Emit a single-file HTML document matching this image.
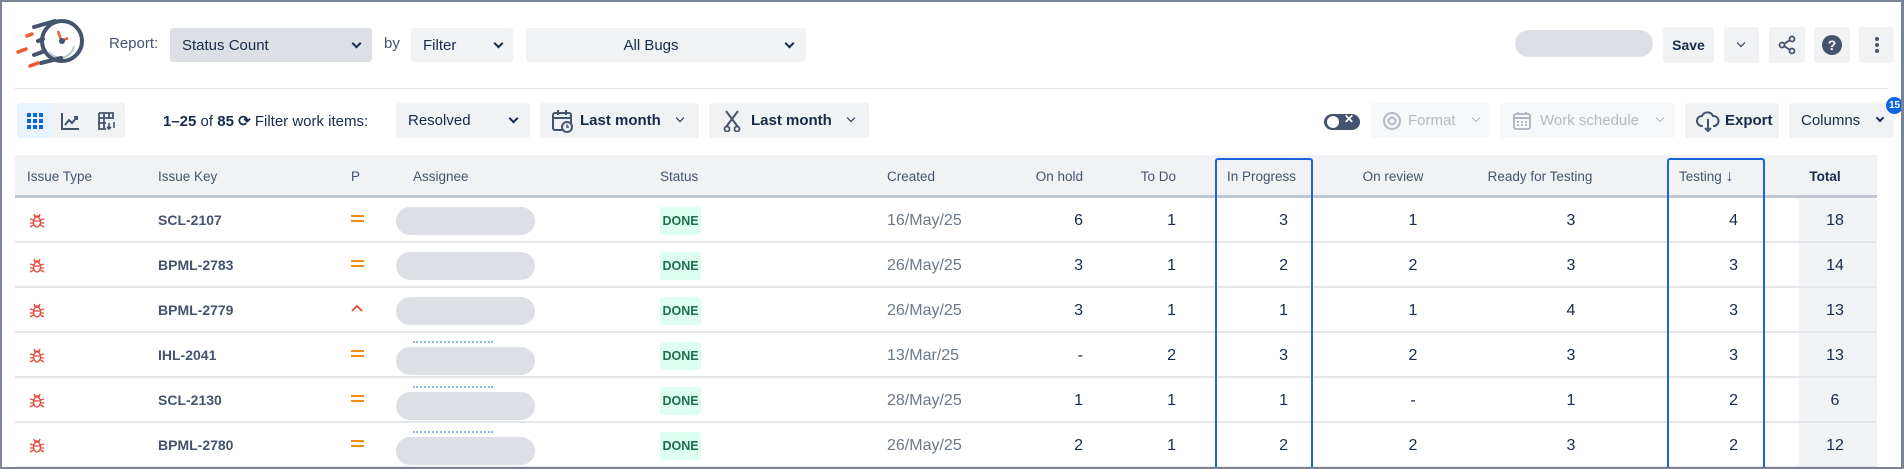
<!DOCTYPE html>
<html><head><meta charset="utf-8"><style>
*{box-sizing:border-box;margin:0;padding:0}
body{width:1904px;height:469px;overflow:hidden;background:#fff;font-family:"Liberation Sans",sans-serif;color:#172b4d;position:relative}
.frame{position:absolute;left:0;top:0;width:1904px;height:469px;border:2px solid #7b8494;border-right-width:3px}
.a{position:absolute}
.btn{position:absolute;background:#f1f2f4;border-radius:3px;display:flex;align-items:center;font-size:15px;color:#172b4d}
.sel{background:#dcdfe4}
.chev{position:absolute;width:7px;height:7px;border-right:2px solid #172b4d;border-bottom:2px solid #172b4d;transform:rotate(45deg)}
.th{position:absolute;top:155px;height:43px;line-height:43px;font-size:13.5px;color:#44546f}
.row{position:absolute;left:15px;width:1862px;height:45px;border-bottom:2px solid #e4e6ea}
.c{position:absolute;line-height:45px;font-size:16px;color:#172b4d}
.key{position:absolute;left:143px;line-height:45px;font-size:14px;font-weight:bold;color:#44546f}
.pill{position:absolute;left:381px;width:139px;height:28px;background:#dcdfe4;border-radius:14px}
.done{position:absolute;left:645px;top:9px;width:41px;height:28px;background:#dcfff1;border-radius:3px;color:#216e4e;font-weight:bold;font-size:12.5px;line-height:28px;text-align:center}
.date{position:absolute;left:872px;line-height:45px;font-size:16px;color:#6b778c}
.r{text-align:right}
.ctr{text-align:center}
.dis{color:#b3b9c4;background:#f7f8f9}
</style></head><body>

<!-- logo -->
<svg class="a" style="left:0;top:0" width="100" height="90" viewBox="0 0 100 90">
<circle cx="62" cy="41" r="20" fill="none" stroke="#44546f" stroke-width="4"/>
<path d="M49 52 A14 14 0 0 0 74 46" fill="none" stroke="#c1c7d0" stroke-width="2"/>
<line x1="58" y1="31" x2="61" y2="40" stroke="#f15b2a" stroke-width="2.5"/>
<line x1="62" y1="41" x2="68" y2="38" stroke="#f15b2a" stroke-width="2.5"/>
<circle cx="62" cy="41" r="3" fill="#44546f"/>
<path d="M34 27 L55 21 M38 41 L43 39 M34 55 L45 51 M41 63 L61 58" stroke="#44546f" stroke-width="4" stroke-linecap="round"/>
<path d="M27 36 L32 34 M18 52 L26 49 M30 66 L38 63" stroke="#f15b2a" stroke-width="3.5" stroke-linecap="round"/>
</svg>

<div class="a" style="left:109px;top:35px;font-size:15px;color:#44546f">Report:</div>
<div class="btn sel" style="left:170px;top:28px;width:202px;height:34px;padding-left:12px">Status Count<span class="chev" style="left:183px;top:12px"></span></div>
<div class="a" style="left:384px;top:35px;font-size:15px;color:#44546f">by</div>
<div class="btn" style="left:411px;top:28px;width:102px;height:34px;padding-left:12px">Filter<span class="chev" style="left:84px;top:12px"></span></div>
<div class="btn" style="left:526px;top:28px;width:280px;height:34px;justify-content:center;padding-right:30px">All Bugs<span class="chev" style="left:260px;top:12px"></span></div>

<div class="a" style="left:1515px;top:30px;width:138px;height:27px;background:#dcdfe4;border-radius:14px"></div>
<div class="btn" style="left:1663px;top:27px;width:51px;height:36px;justify-content:center;font-weight:bold;font-size:14px">Save</div>
<div class="btn" style="left:1724px;top:27px;width:35px;height:36px"><span class="chev" style="left:14px;top:13px;width:6px;height:6px;border-width:1.5px"></span></div>
<div class="btn" style="left:1769px;top:27px;width:36px;height:36px;justify-content:center">
<svg width="20" height="20" viewBox="0 0 20 20"><circle cx="15" cy="4" r="2.5" fill="none" stroke="#44546f" stroke-width="1.8"/><circle cx="5" cy="10" r="2.5" fill="none" stroke="#44546f" stroke-width="1.8"/><circle cx="15" cy="16" r="2.5" fill="none" stroke="#44546f" stroke-width="1.8"/><path d="M7 9 L13 5 M7 11 L13 15" stroke="#44546f" stroke-width="1.8"/></svg></div>
<div class="btn" style="left:1814px;top:27px;width:36px;height:36px;justify-content:center">
<svg width="22" height="22" viewBox="0 0 22 22"><circle cx="11" cy="11" r="10" fill="#44546f"/><text x="11" y="16" font-size="14" font-weight="bold" fill="#fff" text-anchor="middle" font-family="Liberation Sans">?</text></svg></div>
<div class="btn" style="left:1859px;top:27px;width:35px;height:36px;justify-content:center">
<svg width="6" height="20"><circle cx="3" cy="4" r="2" fill="#44546f"/><circle cx="3" cy="10" r="2" fill="#44546f"/><circle cx="3" cy="16" r="2" fill="#44546f"/></svg></div>

<div class="a" style="left:15px;top:88px;width:1873px;height:1px;background:#dcdfe4"></div>

<!-- toolbar -->
<div class="a" style="left:17px;top:103px;width:108px;height:35px;background:#f1f2f4;border-radius:3px"></div>
<div class="a" style="left:17px;top:103px;width:36px;height:35px;background:#e9f2ff;border-radius:3px"></div>
<svg class="a" style="left:26px;top:112px" width="18" height="18"><g fill="#0c66e4"><rect x="1" y="1" width="4" height="4"/><rect x="7" y="1" width="4" height="4"/><rect x="13" y="1" width="4" height="4"/><rect x="1" y="7" width="4" height="4"/><rect x="7" y="7" width="4" height="4"/><rect x="13" y="7" width="4" height="4"/><rect x="1" y="13" width="4" height="4"/><rect x="7" y="13" width="4" height="4"/><rect x="13" y="13" width="4" height="4"/></g></svg>
<svg class="a" style="left:60px;top:111px" width="20" height="20"><path d="M2 2 V18 H19" fill="none" stroke="#44546f" stroke-width="2"/><path d="M5 14 L9 9 L12 12 L17 6 M14 6 H17 V9" fill="none" stroke="#44546f" stroke-width="2"/></svg>
<svg class="a" style="left:97px;top:111px" width="20" height="20"><path d="M2 2 H16 V8 M2 2 V18 H9 M2 7 H16 M2 12 H9 M7 2 V18 M12 2 V8" fill="none" stroke="#44546f" stroke-width="1.8"/><path d="M12 12 V18 M10 16 L12 18 L14 16 M17 11 V17" fill="none" stroke="#44546f" stroke-width="1.6"/></svg>

<div class="a" style="left:163px;top:112px;font-size:15px;color:#172b4d"><b>1–25</b> of <b>85</b> <b>⟳</b> Filter work items:</div>
<div class="btn" style="left:396px;top:103px;width:134px;height:35px;padding-left:12px">Resolved<span class="chev" style="left:114px;top:12px"></span></div>
<div class="btn" style="left:540px;top:103px;width:159px;height:35px;padding-left:12px;font-weight:bold">
<svg width="22" height="24" style="margin-right:6px"><rect x="1" y="4" width="18" height="17" rx="2" fill="none" stroke="#44546f" stroke-width="2"/><path d="M1 9 H19 M6 1 V6 M14 1 V6" stroke="#44546f" stroke-width="2"/><circle cx="15" cy="18" r="5" fill="#f1f2f4" stroke="#44546f" stroke-width="2"/><path d="M15 15.5 V18 H17" stroke="#44546f" stroke-width="1.5" fill="none"/></svg>Last month<span class="chev" style="left:137px;top:12px;width:6px;height:6px;border-width:1.5px"></span></div>
<div class="btn" style="left:709px;top:103px;width:160px;height:35px;padding-left:14px;font-weight:bold">
<svg width="18" height="22" style="margin-right:10px"><path d="M3 1 L15 17 M15 1 L3 17" stroke="#44546f" stroke-width="2"/><circle cx="4" cy="19" r="2.5" fill="none" stroke="#44546f" stroke-width="1.8"/><circle cx="14" cy="19" r="2.5" fill="none" stroke="#44546f" stroke-width="1.8"/></svg>Last month<span class="chev" style="left:139px;top:12px;width:6px;height:6px;border-width:1.5px"></span></div>

<div class="a" style="left:1324px;top:114px;width:36px;height:16px;background:#44546f;border-radius:8px"></div>
<div class="a" style="left:1327px;top:116px;width:12px;height:12px;background:#fff;border-radius:6px"></div>
<div class="a" style="left:1344px;top:112px;color:#fff;font-size:12px;font-weight:bold">✕</div>
<div class="btn dis" style="left:1370px;top:103px;width:120px;height:35px;padding-left:12px;color:#b3b9c4">
<svg width="20" height="20" style="margin-right:6px"><circle cx="10" cy="10" r="8" fill="none" stroke="#b3b9c4" stroke-width="2"/><circle cx="10" cy="10" r="3.5" fill="none" stroke="#b3b9c4" stroke-width="2"/></svg>Format<span class="chev" style="left:103px;top:12px;width:6px;height:6px;border-width:1.5px;border-color:#b3b9c4"></span></div>
<div class="btn dis" style="left:1500px;top:103px;width:175px;height:35px;padding-left:12px;color:#b3b9c4">
<svg width="20" height="20" style="margin-right:8px"><rect x="2" y="3" width="16" height="15" rx="2" fill="none" stroke="#b3b9c4" stroke-width="2"/><path d="M2 7 H18 M6 1 V4 M14 1 V4" stroke="#b3b9c4" stroke-width="2"/><g fill="#b3b9c4"><rect x="5" y="10" width="2" height="2"/><rect x="9" y="10" width="2" height="2"/><rect x="13" y="10" width="2" height="2"/><rect x="5" y="13" width="2" height="2"/><rect x="9" y="13" width="2" height="2"/><rect x="13" y="13" width="2" height="2"/></g></svg>Work schedule<span class="chev" style="left:157px;top:12px;width:6px;height:6px;border-width:1.5px;border-color:#b3b9c4"></span></div>
<div class="btn" style="left:1685px;top:103px;width:94px;height:35px;padding-left:11px;font-weight:bold">
<svg width="24" height="22" style="margin-right:5px"><path d="M7 16 H6 A5 5 0 0 1 6 6 A6 6 0 0 1 17 6 A4.5 4.5 0 0 1 18 16 H17" fill="none" stroke="#44546f" stroke-width="2"/><path d="M12 9 V21 M9 18 L12 21 L15 18" fill="none" stroke="#44546f" stroke-width="2"/></svg>Export</div>
<div class="btn" style="left:1789px;top:103px;width:105px;height:35px;padding-left:12px">Columns<span class="chev" style="left:88px;top:12px;width:6px;height:6px"></span></div>
<div class="a" style="left:1886px;top:97px;width:17px;height:17px;background:#0c66e4;border-radius:9px;color:#fff;font-size:10px;font-weight:bold;text-align:center;line-height:17px">15</div>

<!-- table header -->
<div class="a" style="left:15px;top:155px;width:1862px;height:43px;background:#f1f2f4;border-bottom:3px solid #c1c7d0"></div>
<div class="th" style="left:27px">Issue Type</div>
<div class="th" style="left:158px">Issue Key</div>
<div class="th" style="left:351px">P</div>
<div class="th" style="left:413px">Assignee</div>
<div class="th" style="left:660px">Status</div>
<div class="th" style="left:887px">Created</div>
<div class="th r" style="left:1000px;width:83px">On hold</div>
<div class="th r" style="left:1100px;width:76px">To Do</div>
<div class="th" style="left:1227px">In Progress</div>
<div class="th ctr" style="left:1343px;width:100px">On review</div>
<div class="th ctr" style="left:1470px;width:140px">Ready for Testing</div>
<div class="th" style="left:1679px">Testing <b style="color:#44546f;font-size:16px">↓</b></div>
<div class="th ctr" style="left:1799px;width:52px;font-weight:bold;color:#172b4d">Total</div>
<div class="a" style="left:1799px;top:198px;width:78px;height:269px;background:#f1f2f4"></div>

<div id="rows"></div>

<script>
var data=[["SCL-2107","=","16/May/25","6","1","3","1","3","4","18"],
["BPML-2783","=","26/May/25","3","1","2","2","3","3","14"],
["BPML-2779","^","26/May/25","3","1","1","1","4","3","13"],
["IHL-2041","=","13/Mar/25","-","2","3","2","3","3","13"],
["SCL-2130","=","28/May/25","1","1","1","-","1","2","6"],
["BPML-2780","=","26/May/25","2","1","2","2","3","2","12"]];
var h="";
data.forEach(function(d,i){
var t=198+i*45,off=i>=3?5:0;
var bug='<svg style="position:absolute;left:14px;top:13px" width="16" height="18" viewBox="0 0 16 18"><g fill="none" stroke="#e5493a" stroke-width="1.3"><ellipse cx="8" cy="11" rx="3.5" ry="5"/><path d="M5 3 L6 6 M11 3 L10 6 M6 5 H10 M1 8 L4.5 9 M15 8 L11.5 9 M1 12 H4.5 M15 12 H11.5 M1 16 L4.5 14 M15 16 L11.5 14 M4.5 10 H11.5"/></g></svg>';
var pr=d[1]=="="?'<div style="position:absolute;left:336px;top:17px;width:13px;height:2px;background:#f18d13"></div><div style="position:absolute;left:336px;top:22px;width:13px;height:2px;background:#f18d13"></div>':'<svg style="position:absolute;left:335px;top:15px" width="14" height="10"><path d="M2 8 L7 3 L12 8" fill="none" stroke="#e5493a" stroke-width="1.8"/></svg>';
h+='<div class="row" style="top:'+t+'px">'+bug+'<span class="key">'+d[0]+'</span>'+pr+
(off?'<div style="position:absolute;left:398px;top:8px;width:80px;height:2px;border-top:2px dotted #8fb8f6"></div>':'')+
'<div class="pill" style="top:'+(9+off)+'px"></div><div class="done">DONE</div><span class="date">'+d[2]+'</span>'+
'<span class="c r" style="left:1000px;width:68px">'+d[3]+'</span>'+
'<span class="c r" style="left:1100px;width:61px">'+d[4]+'</span>'+
'<span class="c r" style="left:1200px;width:73px">'+d[5]+'</span>'+
'<span class="c ctr" style="left:1348px;width:100px">'+d[6]+'</span>'+
'<span class="c ctr" style="left:1506px;width:100px">'+d[7]+'</span>'+
'<span class="c r" style="left:1650px;width:73px">'+d[8]+'</span>'+
'<span class="c ctr" style="left:1794px;width:52px">'+d[9]+'</span></div>';
});
document.getElementById("rows").innerHTML=h;
</script>

<!-- highlight boxes -->
<div class="a" style="left:1215px;top:158px;width:98px;height:309px;border:2px solid #1d63dc;border-bottom:none;border-radius:3px 3px 0 0"></div>
<div class="a" style="left:1667px;top:158px;width:98px;height:309px;border:2px solid #1d63dc;border-bottom:none;border-radius:3px 3px 0 0"></div>

<div class="frame"></div>
</body></html>
